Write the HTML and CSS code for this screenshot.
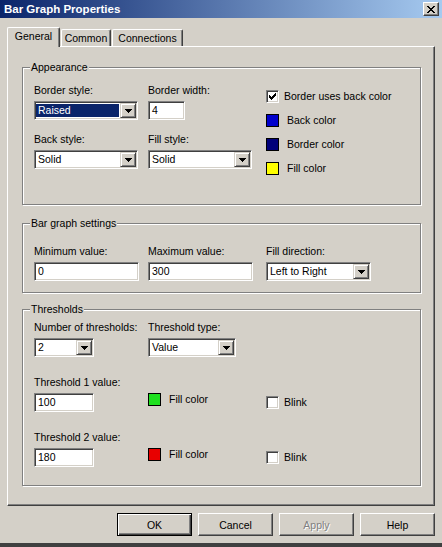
FILE: index.html
```html
<!DOCTYPE html>
<html lang="en">
<head>
    <meta charset="UTF-8">
    <meta name="viewport" content="width=device-width, initial-scale=1.0">
    <title>Bar Graph Properties</title>
    <link rel="stylesheet" href="styles.css">
</head>
<body>
    <div class="dialog">
        <div class="titlebar">
            <span class="title">Bar Graph Properties</span>
            <button class="close-btn" type="button" aria-label="Close">
                <svg width="8" height="7" viewBox="0 0 8 7"><path d="M0 0h2v1H0zM6 0h2v1H6zM1 1h2v1H1zM5 1h2v1H5zM2 2h4v1H2zM3 3h2v1H3zM2 4h4v1H2zM1 5h2v1H1zM5 5h2v1H5zM0 6h2v1H0zM6 6h2v1H6z" fill="#000"/></svg>
            </button>
        </div>

        <div class="tabs">
            <div class="tab active">General</div>
            <div class="tab tab-common">Common</div>
            <div class="tab tab-connections">Connections</div>
        </div>

        <div class="panel">
            <fieldset class="group appearance">
                <legend>Appearance</legend>
                <div class="group-body">
                    <div class="field">
                        <span class="label">Border style:</span>
                        <div class="combo w104 focused">
                            <span class="combo-value">Raised</span>
                            <span class="combo-btn"><svg width="7" height="4" viewBox="0 0 7 4"><path d="M0 0h7v1H0zM1 1h5v1H1zM2 2h3v1H2zM3 3h1v1H3z" fill="#000"/></svg></span>
                        </div>
                    </div>
                    <div class="field">
                        <span class="label">Border width:</span>
                        <div class="textbox w37">4</div>
                    </div>
                    <div class="options">
                        <div class="option">
                            <span class="checkbox"><svg width="7" height="7" viewBox="0 0 7 7"><path d="M6 0h1v1H6zM5 1h2v1H5zM0 2h1v1H0zM4 2h3v1H4zM0 3h2v1H0zM3 3h3v1H3zM0 4h5v1H0zM1 5h3v1H1zM2 6h1v1H2z" fill="#000"/></svg></span>
                            Border uses back color
                        </div>
                        <div class="option color-option"><span class="swatch blue"></span>Back color</div>
                        <div class="option color-option"><span class="swatch navy"></span>Border color</div>
                        <div class="option color-option"><span class="swatch yellow"></span>Fill color</div>
                    </div>
                    <div class="field">
                        <span class="label">Back style:</span>
                        <div class="combo w104">
                            <span class="combo-value">Solid</span>
                            <span class="combo-btn"><svg width="7" height="4" viewBox="0 0 7 4"><path d="M0 0h7v1H0zM1 1h5v1H1zM2 2h3v1H2zM3 3h1v1H3z" fill="#000"/></svg></span>
                        </div>
                    </div>
                    <div class="field">
                        <span class="label">Fill style:</span>
                        <div class="combo w104">
                            <span class="combo-value">Solid</span>
                            <span class="combo-btn"><svg width="7" height="4" viewBox="0 0 7 4"><path d="M0 0h7v1H0zM1 1h5v1H1zM2 2h3v1H2zM3 3h1v1H3z" fill="#000"/></svg></span>
                        </div>
                    </div>
                </div>
            </fieldset>

            <fieldset class="group bargraph">
                <legend>Bar graph settings</legend>
                <div class="group-body">
                    <div class="field">
                        <span class="label">Minimum value:</span>
                        <div class="textbox w105">0</div>
                    </div>
                    <div class="field">
                        <span class="label">Maximum value:</span>
                        <div class="textbox w105">300</div>
                    </div>
                    <div class="field">
                        <span class="label">Fill direction:</span>
                        <div class="combo w105">
                            <span class="combo-value">Left to Right</span>
                            <span class="combo-btn"><svg width="7" height="4" viewBox="0 0 7 4"><path d="M0 0h7v1H0zM1 1h5v1H1zM2 2h3v1H2zM3 3h1v1H3z" fill="#000"/></svg></span>
                        </div>
                    </div>
                </div>
            </fieldset>

            <fieldset class="group thresholds">
                <legend>Thresholds</legend>
                <div class="group-body">
                    <div class="field">
                        <span class="label">Number of thresholds:</span>
                        <div class="combo w60">
                            <span class="combo-value">2</span>
                            <span class="combo-btn"><svg width="7" height="4" viewBox="0 0 7 4"><path d="M0 0h7v1H0zM1 1h5v1H1zM2 2h3v1H2zM3 3h1v1H3z" fill="#000"/></svg></span>
                        </div>
                    </div>
                    <div class="field">
                        <span class="label">Threshold type:</span>
                        <div class="combo w88">
                            <span class="combo-value">Value</span>
                            <span class="combo-btn"><svg width="7" height="4" viewBox="0 0 7 4"><path d="M0 0h7v1H0zM1 1h5v1H1zM2 2h3v1H2zM3 3h1v1H3z" fill="#000"/></svg></span>
                        </div>
                    </div>
                    <div></div>

                    <div class="field">
                        <span class="label">Threshold 1 value:</span>
                        <div class="textbox w60">100</div>
                    </div>
                    <div class="option color-option fill-item"><span class="swatch green"></span>Fill color</div>
                    <div class="option blink-item"><span class="checkbox"></span>Blink</div>

                    <div class="field">
                        <span class="label">Threshold 2 value:</span>
                        <div class="textbox w60">180</div>
                    </div>
                    <div class="option color-option fill-item"><span class="swatch red"></span>Fill color</div>
                    <div class="option blink-item"><span class="checkbox"></span>Blink</div>
                </div>
            </fieldset>
        </div>

        <div class="buttons">
            <button class="btn default" type="button">OK</button>
            <button class="btn" type="button">Cancel</button>
            <button class="btn disabled" type="button">Apply</button>
            <button class="btn" type="button">Help</button>
        </div>

        <div class="frame-bottom"></div>
    </div>
</body>
</html>
```

FILE: styles.css
```css
* {
    box-sizing: border-box;
}
body {
    margin: 0;
    background: #d4d0c8;
    font-family: "Liberation Sans", Arial, sans-serif;
    font-size: 10.5px;
    color: #000;
}
.dialog {
    width: 442px;
    height: 547px;
    display: flex;
    flex-direction: column;
}

/* title bar */
.titlebar {
    flex: none;
    height: 18px;
    display: flex;
    align-items: center;
    justify-content: space-between;
    padding: 0 3px 0 4px;
    background: linear-gradient(to right, #0a246a, #a6caf0);
}
.title {
    color: #fff;
    font-weight: bold;
    font-size: 11.5px;
    line-height: 14px;
}
.close-btn {
    width: 16px;
    height: 14px;
    padding: 0;
    display: flex;
    align-items: center;
    justify-content: center;
    background: #d4d0c8;
    border: 1px solid;
    border-color: #fff #404040 #404040 #fff;
    box-shadow: inset -1px -1px #808080;
}

/* tabs */
.tabs {
    flex: none;
    height: 28px;
    display: flex;
    align-items: flex-end;
    padding-left: 7px;
}
.tab {
    height: 17px;
    margin-left: 1px;
    padding-top: 1px;
    line-height: 14px;
    text-align: center;
    border: 1px solid;
    border-bottom: 0;
    border-color: #fff #404040 #fff #fff;
    border-radius: 2px 2px 0 0;
    box-shadow: inset -1px 0 #808080;
}
.tab.active {
    position: relative;
    z-index: 1;
    width: 53px;
    height: 20px;
    margin-left: 0;
    margin-bottom: -1px;
    background: #d4d0c8;
}
.tab-common {
    width: 50px;
}
.tab-connections {
    width: 71px;
}

.panel {
    margin-left: 7px;
    width: 428px;
    padding: 14px 13px 19px 14px;
    border: 1px solid;
    border-color: #fff #404040 #404040 #fff;
    box-shadow: inset -1px -1px #808080;
}

/* group boxes */
.group {
    margin: 0;
    padding: 0;
    min-width: 0;
    border: 1px solid #808080;
    box-shadow: inset 1px 1px #fff, 1px 1px #fff;
}
.group legend {
    margin-left: 7px;
    padding: 0 1px;
    line-height: 13px;
    background: #d4d0c8;
}
.group-body {
    display: grid;
    grid-template-columns: 114px 118px 1fr;
    align-items: start;
    padding-left: 11px;
}
.appearance .group-body {
    padding-top: 10px;
    padding-bottom: 29px;
    row-gap: 7px;
}
.appearance .options {
    grid-column: 3;
    grid-row: 1 / span 2;
}
.bargraph {
    margin-top: 12px;
}
.bargraph .group-body {
    padding-top: 15px;
    padding-bottom: 11px;
}
.thresholds {
    margin-top: 10px;
}
.thresholds .group-body {
    padding-top: 5px;
    padding-bottom: 18px;
    row-gap: 19px;
}

.field {
    display: flex;
    flex-direction: column;
    gap: 4px;
}
.label {
    line-height: 13px;
}

/* edit boxes and combos */
.textbox,
.combo {
    height: 19px;
    background: #fff;
    border: 1px solid;
    border-color: #808080 #fff #fff #808080;
    box-shadow: inset 1px 1px #404040, inset -1px -1px #d4d0c8;
}
.textbox {
    padding: 1px 3px;
    line-height: 15px;
}
.combo {
    display: flex;
    padding: 1px;
}
.combo-value {
    flex: 1;
    padding: 0 2px;
    line-height: 15px;
    white-space: nowrap;
}
.combo.focused .combo-value {
    margin: 1px 1px 1px 0;
    padding-left: 2px;
    line-height: 13px;
    background: #0a246a;
    color: #fff;
}
.combo-btn {
    width: 16px;
    height: 15px;
    display: flex;
    align-items: center;
    justify-content: center;
    background: #d4d0c8;
    border: 1px solid;
    border-color: #d4d0c8 #404040 #404040 #d4d0c8;
    box-shadow: inset 1px 1px #fff, inset -1px -1px #808080;
}
.w37 { width: 37px; }
.w60 { width: 60px; }
.w88 { width: 88px; }
.w104 { width: 104px; }
.w105 { width: 105px; }

/* check boxes and colour swatches */
.options {
    display: flex;
    flex-direction: column;
    gap: 11px;
    padding-top: 6px;
}
.option {
    display: flex;
    align-items: center;
    gap: 5px;
    height: 13px;
    line-height: 13px;
    white-space: nowrap;
}
.color-option {
    gap: 8px;
}
.checkbox {
    width: 13px;
    height: 13px;
    flex: none;
    display: flex;
    align-items: center;
    justify-content: center;
    background: #fff;
    border: 1px solid;
    border-color: #808080 #fff #fff #808080;
    box-shadow: inset 1px 1px #404040, inset -1px -1px #d4d0c8;
}
.swatch {
    width: 13px;
    height: 13px;
    flex: none;
    border: 1px solid #000;
}
.swatch.blue { background: #0000cc; }
.swatch.navy { background: #00007a; }
.swatch.yellow { background: #ffff00; }
.swatch.green { background: #1fe01f; }
.swatch.red { background: #e80000; }
.fill-item {
    align-self: end;
    margin-bottom: 6px;
}
.blink-item {
    align-self: end;
    margin-bottom: 3px;
}

/* bottom buttons */
.buttons {
    flex: none;
    width: 435px;
    margin-top: 7px;
    display: flex;
    justify-content: flex-end;
    gap: 6px;
}
.btn {
    width: 75px;
    height: 23px;
    padding: 0;
    font: inherit;
    color: #000;
    background: #d4d0c8;
    border: 1px solid;
    border-color: #fff #404040 #404040 #fff;
    box-shadow: inset -1px -1px #808080;
}
.btn.default {
    border-color: #000;
    box-shadow: inset 1px 1px #fff, inset -1px -1px #404040, inset -2px -2px #808080;
}
.btn.disabled {
    color: #808080;
    text-shadow: 1px 1px #fff;
}
.frame-bottom {
    flex: none;
    margin-top: auto;
    height: 4px;
    background: #404040;
}
```
